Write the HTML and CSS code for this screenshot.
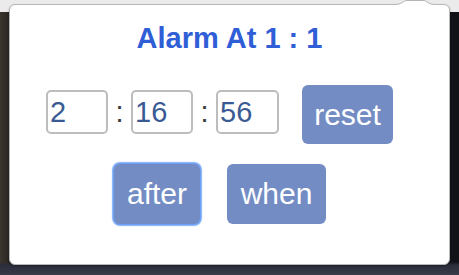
FILE: index.html
```html
<!DOCTYPE html>
<html>
<head>
<meta charset="utf-8">
<link rel="stylesheet" href="styles.css">
</head>
<body>
<div class="panel">
  <div class="title">Alarm At 1 : 1</div>
  <div class="row">
    <input class="num" type="text" value="2">
    <span class="colon">:</span>
    <input class="num" type="text" value="16">
    <span class="colon">:</span>
    <input class="num wide" type="text" value="56">
    <button class="btn reset">reset</button>
  </div>
  <div class="row row2">
    <button class="btn after">after</button>
    <button class="btn when">when</button>
  </div>
</div>
<svg class="notch" width="40" height="8" viewBox="0 0 40 8">
  <path d="M0 4.5 C7 4.5 8 0.5 12 0.5 L28 0.5 C32 0.5 33 4.5 40 4.5 L40 8 L0 8 Z" fill="#ffffff"/>
  <path d="M0 4.5 C7 4.5 8 0.5 12 0.5 L28 0.5 C32 0.5 33 4.5 40 4.5" fill="none" stroke="#b4b4b4" stroke-width="1"/>
</svg>
</body>
</html>
```
FILE: styles.css
```css
html, body {
  margin: 0;
  padding: 0;
}
body {
  width: 459px;
  height: 275px;
  overflow: hidden;
  position: relative;
  font-family: "Liberation Sans", Arial, sans-serif;
  background:
    linear-gradient(#ebebeb 0, #ebebeb 12px, transparent 12px),
    linear-gradient(to bottom, transparent 0, transparent 262px, #2c2d3c 265px, #3a3b48 275px),
    linear-gradient(to right, #3b352e 0, #2a2622 9px, #1c1c26 40%, #111118 100%);
}
.panel {
  box-sizing: border-box;
  margin: 4px 9px 0 9px;
  height: 261px;
  background: #ffffff;
  border: 1px solid #b8b8b8;
  border-radius: 6px;
  box-shadow: 0 1px 2px rgba(0,0,0,0.35);
}
.title {
  padding-top: 16px;
  text-align: center;
  font-size: 29px;
  line-height: 34px;
  font-weight: bold;
  color: #2f5ed6;
}
.row {
  display: flex;
  justify-content: center;
  align-items: flex-start;
  padding-right: 20px;
  margin-top: 30px;
}
.num {
  box-sizing: border-box;
  width: 62px;
  height: 44px;
  margin: 5px 0 0 0;
  padding: 0 0 0 2px;
  border: 2px solid #bdbdbd;
  border-radius: 5px;
  background: #ffffff;
  font-family: "Liberation Sans", Arial, sans-serif;
  font-size: 29px;
  color: #3a5a94;
  outline: none;
}
.num.wide {
  width: 63px;
}
.colon {
  width: 23px;
  margin-top: 5px;
  text-align: center;
  font-size: 29px;
  line-height: 44px;
  color: #3c3c3c;
}
.btn {
  box-sizing: border-box;
  height: 60px;
  padding: 0;
  border: none;
  border-radius: 6px;
  background: #738dc4;
  color: #ffffff;
  font-family: "Liberation Sans", Arial, sans-serif;
  font-size: 30px;
  line-height: 34px;
  text-align: center;
}
.reset {
  width: 91px;
  height: 59px;
  margin-left: 23px;
}
.row2 {
  margin-top: 20px;
  gap: 27px;
  padding-right: 19px;
}
.after {
  width: 86px;
  box-shadow: 0 0 0 1px #6fa0f2, 0 0 1px 2px rgba(90,150,245,0.75);
}
.when {
  width: 99px;
}
.notch {
  position: absolute;
  left: 395px;
  top: 0;
}
```
